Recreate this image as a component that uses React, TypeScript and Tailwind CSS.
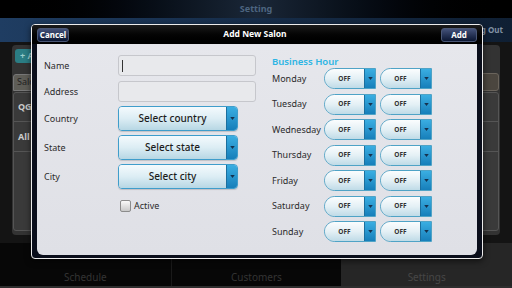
const days = ["Monday", "Tuesday", "Wednesday", "Thursday", "Friday", "Saturday", "Sunday"];

const Caret = () => (
  <svg viewBox="0 0 6 4" className="h-[3px] w-[5px]">
    <path d="M0 0h6L3 4z" fill="#15324f" />
  </svg>
);

const DropPart = () => (
  <div className="flex w-[11px] items-center justify-center border-l border-[#1b6f9e] bg-linear-to-b from-[#3aaee2] to-[#167fba]">
    <Caret />
  </div>
);

const SelectBox = ({ label }: { label: string }) => (
  <div className="flex h-[25px] w-[120px] overflow-hidden rounded-[4px] border border-[#3f9dcb] shadow-[0_1px_1px_rgba(0,0,0,0.15)]">
    <div className="flex flex-1 items-center justify-center bg-linear-to-b from-[#f4fafd] via-[#dcedf4] to-[#b7d7e4] text-[10px] font-medium text-[#1c1c1c]">
      {label}
    </div>
    <DropPart />
  </div>
);

const Toggle = () => (
  <div className="flex h-[21px] w-[52px] overflow-hidden rounded-l-full rounded-r-[3px] border border-[#4fa3c6]">
    <div className="flex flex-1 items-center justify-center bg-linear-to-b from-[#fbfdfe] via-[#e4f0f5] to-[#bfdbe7] text-[6.5px] font-bold text-[#333]">
      OFF
    </div>
    <DropPart />
  </div>
);

const TextInput = ({ cursor }: { cursor?: boolean }) => (
  <div className="flex h-[21px] w-[138px] items-center rounded-[3px] border border-[#c6c7cc] bg-[#e8e9ec] pl-[3px]">
    {cursor ? <div className="h-[12px] w-px bg-[#333]" /> : null}
  </div>
);

const FormRow = ({ label, children, className }: { label: string; children: React.ReactNode; className?: string }) => (
  <div className={`flex items-center ${className ?? ""}`}>
    <span className="w-[74px] text-[9px] text-[#2b2b2b]">{label}</span>
    {children}
  </div>
);

export default function App() {
  return (
    <div className="relative h-[288px] w-[512px] overflow-hidden bg-black font-['Noto_Sans',sans-serif]">
      {/* app behind the dialog */}
      <div className="flex h-[18px] items-center justify-center bg-linear-to-r from-black via-[#1a2738] to-black text-[9px] font-bold text-[#4d6580]">
        Setting
      </div>
      <div className="flex h-[24px] items-center justify-end bg-linear-to-r from-[#1f3d62] to-[#0f1f33] pr-[9px] text-[8px] font-bold text-[#8292a4]">
        Log Out
      </div>
      <div className="h-[201px] bg-[#141414] px-[12px] pt-[3px]">
        <div className="flex h-[190px] flex-col rounded-[4px] bg-[#333333] px-[1px] pt-[4px]">
          <div className="flex h-[14px] items-center">
            <div className="ml-[2px] flex h-[14px] w-[60px] items-center rounded-[3px] bg-[#2b7d84] pl-[5px] text-[9px] font-bold text-[#9cc]">
              + Add
            </div>
          </div>
          <div className="mt-[10px] flex h-[18px] items-center justify-between">
            <div className="flex h-[17px] w-[50px] items-center rounded-t-[3px] border border-[#777] bg-[#5e5d57] pl-[3px] text-[9px] text-[#222]">
              Salon
            </div>
            <div className="h-[18px] w-[22px] rounded-[3px] border border-[#6a645c] bg-[#4b463f]" />
          </div>
          <div className="mt-[1px] flex h-[139px] flex-col rounded-[3px] border border-[#555] bg-[#3a3a3a]">
            <div className="flex h-[29px] items-center border-b border-[#555] pl-[4px] text-[9px] font-bold text-[#ccc]">QG</div>
            <div className="flex h-[30px] items-center border-b border-[#555] pl-[4px] text-[9px] font-bold text-[#ccc]">All</div>
          </div>
        </div>
      </div>
      <div className="grid h-[45px] grid-cols-3 border-b-2 border-[#2e2e2e] bg-[#070707] text-[10px] text-[#343434]">
        <div className="flex items-center justify-center pt-[25px]">Schedule</div>
        <div className="flex items-center justify-center border-l border-[#1a1a1a] pt-[25px]">Customers</div>
        <div className="flex items-center justify-center bg-[#262626] pt-[25px] text-[#474747]">Settings</div>
      </div>

      {/* dialog */}
      <div className="absolute left-[31px] top-[24px] flex h-[235px] w-[452px] flex-col rounded-[4px] border border-[#ececec] bg-[#0a0e1b] shadow-[0_2px_6px_rgba(0,0,0,0.6)]">
        <div className="flex h-[19px] items-center justify-between rounded-t-[3px] bg-linear-to-b from-[#1c1c1c] to-black px-[5px]">
          <button className="flex h-[14px] w-[32px] items-center justify-center rounded-[3px] border border-[#4a5775] bg-linear-to-b from-[#44527a] to-[#0c1733] text-[8px] font-bold text-white">
            Cancel
          </button>
          <span className="text-[8.5px] font-bold text-white">Add New Salon</span>
          <button className="flex h-[14px] w-[36px] items-center justify-center rounded-[3px] border border-[#4a5775] bg-linear-to-b from-[#44527a] to-[#0c1733] text-[8px] font-bold text-white">
            Add
          </button>
        </div>
        <div className="mx-[5px] flex h-[211px] rounded-b-[6px] bg-linear-to-b from-[#e6e7ec] to-[#dfe0e6]">
          <div className="flex w-[235px] flex-col pl-[7px] pt-[11px]">
            <FormRow label="Name">
              <TextInput cursor />
            </FormRow>
            <FormRow label="Address" className="mt-[5px]">
              <TextInput />
            </FormRow>
            <FormRow label="Country" className="mt-[4px]">
              <SelectBox label="Select country" />
            </FormRow>
            <FormRow label="State" className="mt-[4px]">
              <SelectBox label="Select state" />
            </FormRow>
            <FormRow label="City" className="mt-[4px]">
              <SelectBox label="Select city" />
            </FormRow>
            <div className="mt-[10px] flex items-center pl-[76px]">
              <div className="h-[12px] w-[11px] rounded-[2px] border border-[#8c8c8c] bg-linear-to-b from-[#fafafa] to-[#c9c9c9]" />
              <span className="ml-[3px] text-[9px] text-[#2b2b2b]">Active</span>
            </div>
          </div>
          <div className="flex flex-1 flex-col pt-[12px]">
            <div className="h-[12px] text-[9.5px] font-semibold leading-[12px] text-[#2bb5e4]">Business Hour</div>
            <div className="flex flex-col gap-[4.5px]">
              {days.map((d) => (
                <div key={d} className="flex h-[21px] items-center">
                  <span className="w-[52px] text-[9px] text-[#2b2b2b]">{d}</span>
                  <Toggle />
                  <div className="w-[4px]" />
                  <Toggle />
                </div>
              ))}
            </div>
          </div>
        </div>
      </div>
    </div>
  );
}
